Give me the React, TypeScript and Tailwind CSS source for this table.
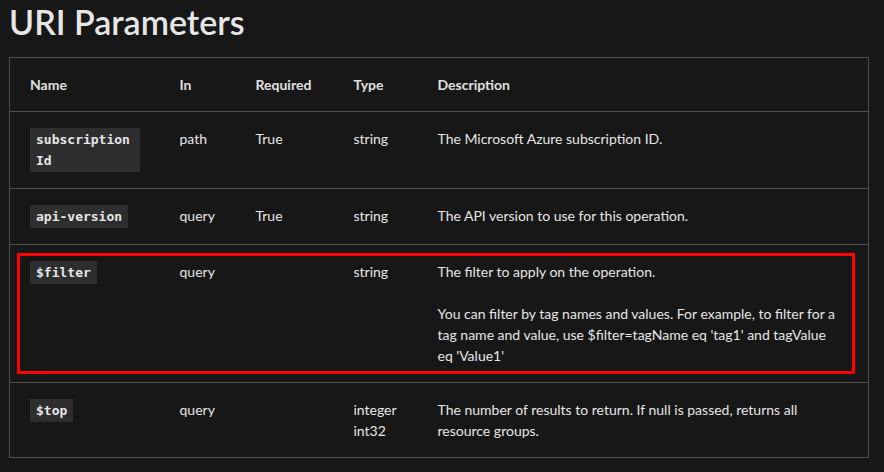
import React from 'react';

interface Param {
  name: string;
  location: string;
  required: string;
  type: string[];
  description: string[];
}

const params: Param[] = [
  {
    name: 'subscriptionId',
    location: 'path',
    required: 'True',
    type: ['string'],
    description: ['The Microsoft Azure subscription ID.'],
  },
  {
    name: 'api-version',
    location: 'query',
    required: 'True',
    type: ['string'],
    description: ['The API version to use for this operation.'],
  },
  {
    name: '$filter',
    location: 'query',
    required: '',
    type: ['string'],
    description: [
      'The filter to apply on the operation.',
      "You can filter by tag names and values. For example, to filter for a tag name and value, use $filter=tagName eq 'tag1' and tagValue eq 'Value1'",
    ],
  },
  {
    name: '$top',
    location: 'query',
    required: '',
    type: ['integer', 'int32'],
    description: ['The number of results to return. If null is passed, returns all resource groups.'],
  },
];

const headers = ['Name', 'In', 'Required', 'Type', 'Description'];

export default function App() {
  return (
    <div
      className="w-[884px] h-[472px] overflow-hidden bg-[#171717] text-[#e6e6e6] px-[9px]"
      style={{ fontFamily: "Lato, 'Noto Sans', sans-serif" }}
    >
      <h1 className="text-[34px] font-semibold leading-[44px] mb-[13px] text-[#e6e6e6]">
        URI Parameters
      </h1>

      <div className="relative w-[860px]">
        <table className="w-full table-fixed border-collapse border border-[#4d4d4d] text-[14px] leading-[21px]">
          <colgroup>
            <col className="w-[150px]" />
            <col className="w-[76px]" />
            <col className="w-[98px]" />
            <col className="w-[84px]" />
            <col />
          </colgroup>
          <thead>
            <tr className="border-b border-[#4d4d4d]">
              {headers.map((h) => (
                <th key={h} className="text-left font-bold px-5 py-4 text-[#e0e0e0]">
                  {h}
                </th>
              ))}
            </tr>
          </thead>
          <tbody>
            {params.map((p) => (
              <tr key={p.name} className="border-b border-[#4d4d4d] align-top">
                <td className="px-5 py-4">
                  <code
                    className="inline-block align-top break-all bg-[#2e2e2e] px-[6px] py-px text-[13px] font-bold leading-[21px] text-[#e6e6e6]"
                    style={{ fontFamily: "'DejaVu Sans Mono', 'Liberation Mono', monospace" }}
                  >
                    {p.name}
                  </code>
                </td>
                <td className="px-5 py-4">{p.location}</td>
                <td className="px-5 py-4">{p.required}</td>
                <td className="px-5 py-4">
                  {p.type.map((t) => (
                    <div key={t}>{t}</div>
                  ))}
                </td>
                <td className="pl-5 pr-6 py-4">
                  {p.description.map((d, i) => (
                    <p key={i} className={i > 0 ? 'mt-[21px]' : ''}>
                      {d}
                    </p>
                  ))}
                </td>
              </tr>
            ))}
          </tbody>
        </table>

        {/* annotation box around $filter row */}
        <div className="absolute left-[8px] top-[196px] w-[838px] h-[121px] border-[3px] border-[#ff0000] pointer-events-none" />
      </div>
    </div>
  );
}
